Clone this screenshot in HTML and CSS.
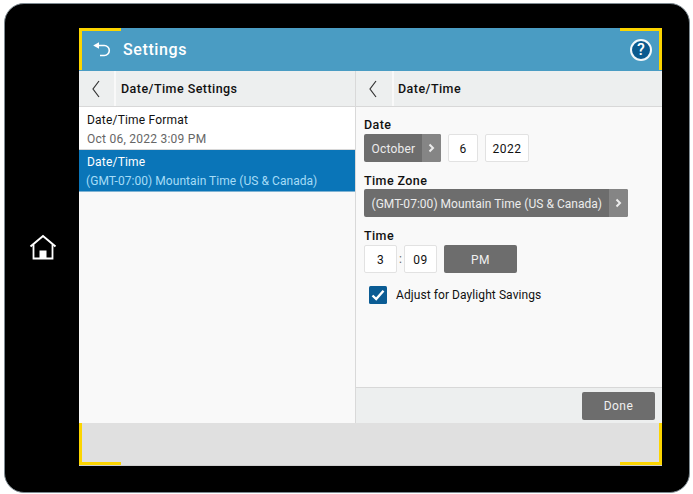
FILE: index.html
```html
<!DOCTYPE html>
<html lang="en">
<head>
<meta charset="utf-8">
<title>Settings</title>
<link rel="stylesheet" href="styles.css">
</head>
<body>
<div class="device">
  <div class="rail">
    <svg class="home" width="28" height="26" viewBox="0 0 28 26" aria-hidden="true">
      <path d="M1.5 12.5 L14 2 L26.5 12.5" fill="none" stroke="#fff" stroke-width="2"/>
      <path d="M4.5 10.5 V24.5 H23.5 V10.5" fill="none" stroke="#fff" stroke-width="1.8"/>
      <rect x="10.5" y="16.5" width="7" height="8" fill="#fff"/>
    </svg>
  </div>
  <div class="screen">
    <header class="topbar">
      <svg class="back" width="20" height="16" viewBox="0 0 20 16" aria-hidden="true">
        <path d="M4 3.5 H12.3 A5 5 0 0 1 12.3 13.5 H8" fill="none" stroke="#fff" stroke-width="1.6"/>
        <path d="M7 0.3 L1.2 3.5 L7 6.7 Z" fill="#fff"/>
      </svg>
      <span class="title">Settings</span>
      <span class="help">?</span>
    </header>
    <div class="panes">
      <section class="pane pane-left">
        <div class="subhead">
          <span class="chev-cell"><svg width="10" height="18" viewBox="0 0 10 18" aria-hidden="true"><path d="M8 1 L2 9 L8 17" fill="none" stroke="#333" stroke-width="1.2"/></svg></span>
          <span class="subtitle">Date/Time Settings</span>
        </div>
        <div class="row">
          <div class="row-main">Date/Time Format</div>
          <div class="row-sub">Oct 06, 2022 3:09 PM</div>
        </div>
        <div class="row row-active">
          <div class="row-main">Date/Time</div>
          <div class="row-sub">(GMT-07:00) Mountain Time (US &amp; Canada)</div>
        </div>
      </section>
      <section class="pane pane-right">
        <div class="subhead">
          <span class="chev-cell"><svg width="10" height="18" viewBox="0 0 10 18" aria-hidden="true"><path d="M8 1 L2 9 L8 17" fill="none" stroke="#333" stroke-width="1.2"/></svg></span>
          <span class="subtitle">Date/Time</span>
        </div>
        <div class="form">
          <div class="label label-date">Date</div>
          <div class="controls">
            <div class="select select-month"><span class="select-text">October</span><span class="select-arrow"><svg width="7" height="10" viewBox="0 0 7 10" aria-hidden="true"><path d="M1.5 1.5 L5 5 L1.5 8.5" fill="none" stroke="#ececec" stroke-width="2"/></svg></span></div>
            <div class="field field-day">6</div>
            <div class="field field-year">2022</div>
          </div>
          <div class="label label-zone">Time Zone</div>
          <div class="controls">
            <div class="select select-zone"><span class="select-text">(GMT-07:00) Mountain Time (US &amp; Canada)</span><span class="select-arrow"><svg width="7" height="10" viewBox="0 0 7 10" aria-hidden="true"><path d="M1.5 1.5 L5 5 L1.5 8.5" fill="none" stroke="#ececec" stroke-width="2"/></svg></span></div>
          </div>
          <div class="label label-time">Time</div>
          <div class="controls">
            <div class="field field-hour">3</div>
            <span class="colon">:</span>
            <div class="field field-min">09</div>
            <div class="button button-pm">PM</div>
          </div>
          <div class="check-row">
            <span class="check"><svg width="18" height="18" viewBox="0 0 18 18" aria-hidden="true"><path d="M3.5 9.5 L7.2 13 L14.5 4.8" fill="none" stroke="#fff" stroke-width="2.4"/></svg></span>
            <span class="check-label">Adjust for Daylight Savings</span>
          </div>
        </div>
        <div class="foot"><div class="button button-done">Done</div></div>
      </section>
    </div>
    <div class="bottombar"></div>
    <i class="corner c-tl"></i><i class="corner c-tr"></i><i class="corner c-bl"></i><i class="corner c-br"></i>
  </div>
</div>
</body>
</html>
```
FILE: styles.css
```css
* { box-sizing: border-box; }
html, body { margin: 0; padding: 0; background: #fff; }
body { width: 693px; height: 494px; overflow: hidden; font-family: Roboto, "Noto Sans", sans-serif; font-size: 12px; color: #111; }
.device { margin: 3px 0 0 4px; width: 686px; height: 490px; background: #000; border: 1px solid #7f8b92; border-radius: 20px; display: flex; padding-top: 24px; }
.rail { width: 74px; height: 438px; display: flex; align-items: center; justify-content: center; padding-left: 2px; }
.screen { position: relative; width: 583px; height: 438px; display: flex; flex-direction: column; background: #f9f9f9; }
.topbar { height: 43px; flex: none; background: #4a9cc3; display: flex; align-items: center; padding: 0 10px 0 13px; color: #fff; }
.back { margin-right: 11px; }
.title { font-size: 16px; font-weight: 500; letter-spacing: .6px; flex: 1; }
.help { width: 22px; height: 22px; border-radius: 50%; background: #0a5a8f; border: 2px solid #f2f7fa; color: #fff; font-size: 16px; font-weight: 500; display: flex; align-items: center; justify-content: center; line-height: 1; }
.panes { flex: 1; display: flex; min-height: 0; }
.pane { display: flex; flex-direction: column; }
.pane-left { width: 277px; border-right: 1px solid #d9d9d9; }
.pane-right { flex: 1; }
.subhead { height: 36px; flex: none; background: #edefef; border-bottom: 1px solid #d8d8d8; display: flex; align-items: stretch; }
.chev-cell { width: 37px; flex: none; border-right: 2px solid #f9f9f9; display: flex; align-items: center; justify-content: center; padding-right: 2px; }
.pane-right .chev-cell { width: 38px; }
.subtitle { font-size: 12.5px; font-weight: 500; align-self: center; padding-left: 5px; letter-spacing: .45px; }
.pane-right .subtitle { padding-left: 4px; }
.row { height: 42.5px; background: #fff; padding: 4px 8px 0; border-bottom: 1px solid #d8d8d8; line-height: 19px; letter-spacing: .2px; }
.row-sub { color: #666; letter-spacing: .25px; }
.row-active { background: #0a75b8; color: #fff; border-bottom-color: #7fb3d3; padding-top: 3px; }
.row-active .row-sub { color: #a5dcf7; letter-spacing: .05px; margin-left: -1px; }
.form { flex: 1; padding: 8px 8px 0; min-height: 0; }
.label { font-size: 12.5px; font-weight: 500; height: 18px; line-height: 20px; letter-spacing: .4px; }
.controls { display: flex; align-items: center; height: 28px; }
.label-date { margin-bottom: 1px; }
.label-zone { margin-top: 9px; }
.label-time { margin-top: 9px; margin-bottom: 1px; }
.select { height: 28px; background: #6d6d6d; color: #ececec; border-radius: 2px; display: flex; align-items: stretch; }
.select-text { flex: 1; display: flex; align-items: center; padding: 1px 0 0 7.5px; white-space: nowrap; letter-spacing: .03px; }
.select-month .select-text { letter-spacing: .2px; }
.select-arrow { width: 19px; background: #858585; border-radius: 0 2px 2px 0; display: flex; align-items: center; justify-content: center; }
.select-month { width: 77px; margin-right: 7px; }
.select-zone { width: 264px; }
.field { height: 28px; padding-top: 1px; background: #fff; border: 1px solid #e2e2e2; border-radius: 2px; display: flex; align-items: center; justify-content: center; letter-spacing: .5px; }
.field-day { width: 30px; margin-right: 7px; }
.field-year { width: 44px; }
.field-hour { width: 33px; }
.field-min { width: 33px; }
.colon { width: 7px; text-align: center; color: #666; }
.button { background: #6d6d6d; color: #f0f0f0; border-radius: 2px; display: flex; align-items: center; justify-content: center; letter-spacing: .5px; }
.button-pm { width: 73px; height: 28px; margin-left: 7px; padding-top: 1px; }
.check-row { display: flex; align-items: center; margin: 13px 0 0 5px; height: 18px; }
.check { width: 18px; height: 18px; background: #0b5c94; border-radius: 1.5px; margin-right: 9px; display: flex; }
.check-label { letter-spacing: .08px; }
.foot { height: 36px; flex: none; background: #edefef; border-top: 1px solid #d8d8d8; display: flex; align-items: center; justify-content: flex-end; padding: 0 7px 0 0; }
.button-done { width: 73px; height: 28px; }
.bottombar { height: 43px; flex: none; background: #e0e0e0; border-bottom: 1px solid #cfcfcf; }
.corner { position: absolute; width: 42px; height: 42px; border: 0 solid #fcd500; }
.c-tl { left: 0; top: 0; border-width: 3px 0 0 3px; }
.c-tr { right: 0; top: 0; border-width: 3px 3px 0 0; }
.c-bl { left: 0; bottom: 1px; border-width: 0 0 3px 3px; }
.c-br { right: 0; bottom: 1px; border-width: 0 3px 3px 0; }
```
